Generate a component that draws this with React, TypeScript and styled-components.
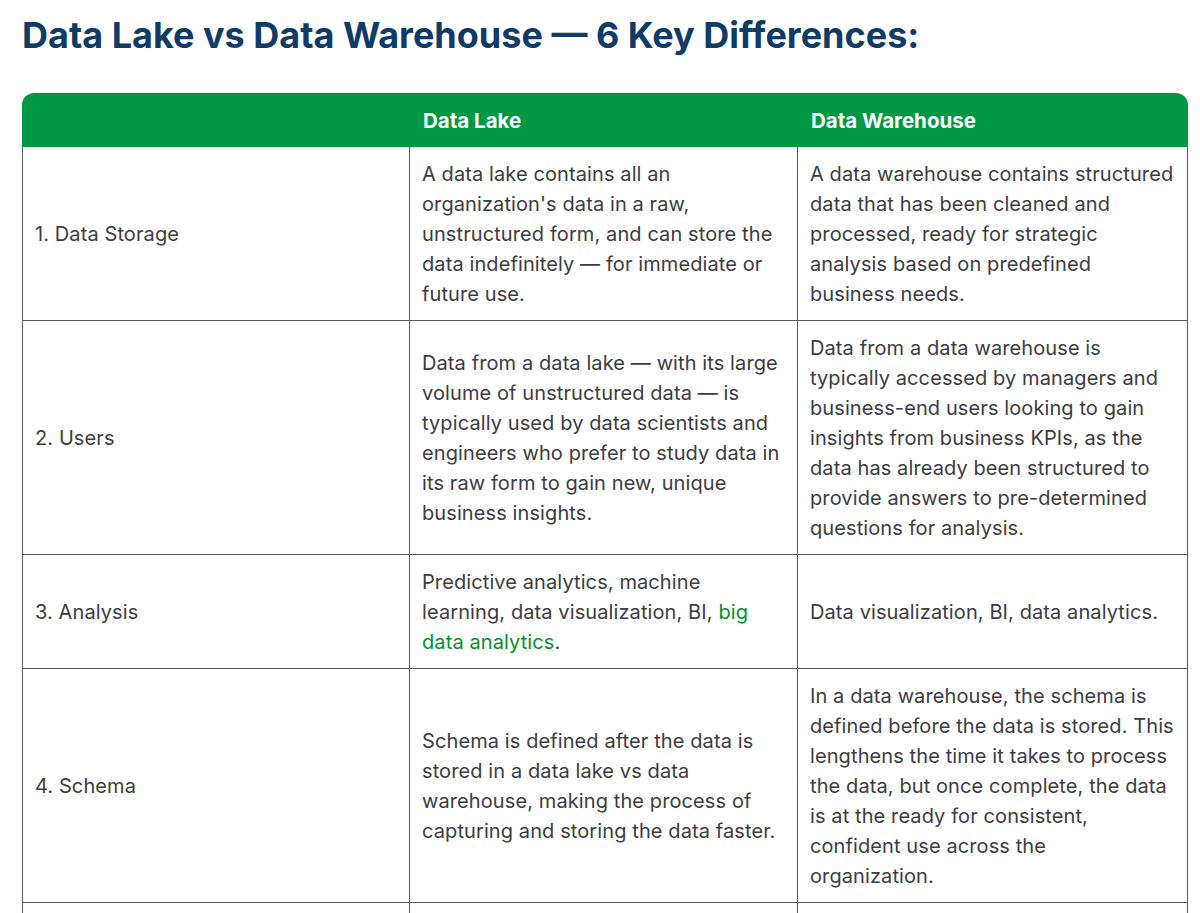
import React from "react";
import styled, { createGlobalStyle } from "styled-components";

const Global = createGlobalStyle`
  html, body { margin: 0; padding: 0; background: #ffffff; }
  body { font-family: Inter, "Noto Sans", Arial, sans-serif; }
`;

const Page = styled.div`
  padding: 13px 12px 0 22px;
`;

const Title = styled.h1`
  margin: 0 0 36px 0;
  font-family: Inter, Arial, sans-serif;
  font-size: 36px;
  line-height: 44px;
  font-weight: 700;
  color: #0f3b66;
  letter-spacing: 0;
`;

const Table = styled.table`
  width: 1166px;
  border-collapse: separate;
  border-spacing: 0;
  table-layout: fixed;
  font-size: 20px;
  line-height: 30px;
  color: #3c3c42;
  letter-spacing: 0.1px;
`;

const HeadCell = styled.th`
  background: #009845;
  color: #ffffff;
  font-weight: 700;
  text-align: left;
  height: 53px;
  padding: 1px 12px 0 13px;
  font-size: 20.5px;
  letter-spacing: 0;
  &:first-child { border-top-left-radius: 12px; }
  &:last-child { border-top-right-radius: 12px; }
`;

const Cell = styled.td`
  padding: 12px 11px 11px 12px;
  vertical-align: middle;
  border-right: 1.5px solid #5b5b5f;
  border-bottom: 1.5px solid #5b5b5f;
  &:first-child { border-left: 1.5px solid #5b5b5f; }
`;

const Link = styled.a`
  color: #00922f;
  text-decoration: none;
`;

type Row = { label: string; lake: React.ReactNode; warehouse: React.ReactNode };

const rows: Row[] = [
  {
    label: "1. Data Storage",
    lake: "A data lake contains all an organization's data in a raw, unstructured form, and can store the data indefinitely — for immediate or future use.",
    warehouse:
      "A data warehouse contains structured data that has been cleaned and processed, ready for strategic analysis based on predefined business needs.",
  },
  {
    label: "2. Users",
    lake: "Data from a data lake — with its large volume of unstructured data — is typically used by data scientists and engineers who prefer to study data in its raw form to gain new, unique business insights.",
    warehouse:
      "Data from a data warehouse is typically accessed by managers and business-end users looking to gain insights from business KPIs, as the data has already been structured to provide answers to pre-determined questions for analysis.",
  },
  {
    label: "3. Analysis",
    lake: (
      <>
        Predictive analytics, machine learning, data visualization, BI,{" "}
        <Link href="#">big data analytics</Link>.
      </>
    ),
    warehouse: "Data visualization, BI, data analytics.",
  },
  {
    label: "4. Schema",
    lake: "Schema is defined after the data is stored in a data lake vs data warehouse, making the process of capturing and storing the data faster.",
    warehouse: (
      <>
        In a data warehouse, the schema is defined before the data is stored. This lengthens the
        time it takes to process the data, but once complete, the data is at the ready for
        consistent, confident use across the
        <br />
        organization.
      </>
    ),
  },
  {
    label: "5. Processing",
    lake: "ELT (Extract, Load, Transform). In this process, the data is extracted from its source for storage in the data lake, and structured only when needed.",
    warehouse:
      "ETL (Extract, Transform, Load). In this process, data is extracted from its source, scrubbed, then structured so it's ready for business-end analysis.",
  },
  {
    label: "6. Cost",
    lake: "Storage costs are fairly inexpensive in a data lake vs data warehouse. Data lakes are also less time-consuming to manage, which reduces operational costs.",
    warehouse:
      "Data warehouses cost more than data lakes, and also require more time to manage, resulting in additional operational costs.",
  },
];

export default function App() {
  return (
    <>
      <Global />
      <Page>
        <Title>Data Lake vs Data Warehouse — 6 Key Differences:</Title>
        <Table>
          <colgroup>
            <col style={{ width: 388 }} />
            <col style={{ width: 388 }} />
            <col style={{ width: 390 }} />
          </colgroup>
          <thead>
            <tr>
              <HeadCell></HeadCell>
              <HeadCell>Data Lake</HeadCell>
              <HeadCell>Data Warehouse</HeadCell>
            </tr>
          </thead>
          <tbody>
            {rows.map((r) => (
              <tr key={r.label}>
                <Cell>{r.label}</Cell>
                <Cell>{r.lake}</Cell>
                <Cell>{r.warehouse}</Cell>
              </tr>
            ))}
          </tbody>
        </Table>
      </Page>
    </>
  );
}
